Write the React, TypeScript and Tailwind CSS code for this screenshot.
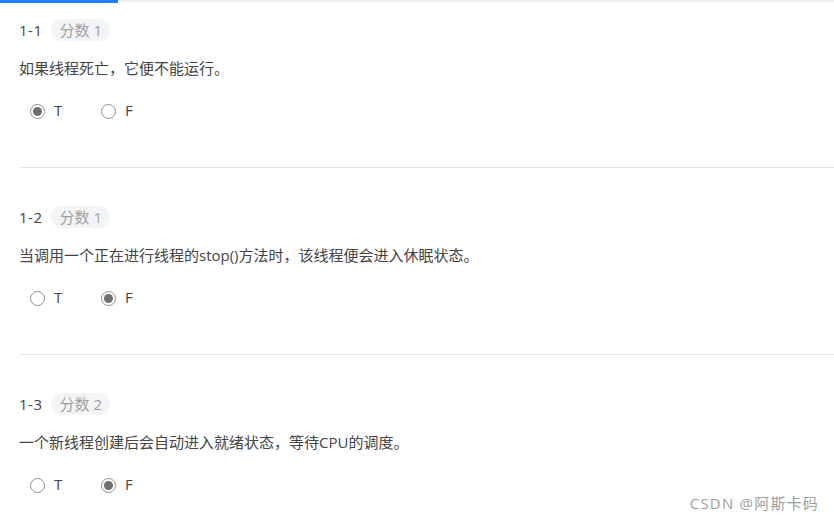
const questions = [
  { no: "1-1", score: 1, text: "如果线程死亡，它便不能运行。", answer: "T" },
  { no: "1-2", score: 1, text: "当调用一个正在进行线程的stop()方法时，该线程便会进入休眠状态。", answer: "F" },
  { no: "1-3", score: 2, text: "一个新线程创建后会自动进入就绪状态，等待CPU的调度。", answer: "F" },
];

function Radio({ label, checked }: { label: string; checked: boolean }) {
  return (
    <div className="flex w-[71px] items-center">
      <span className="flex h-[15px] w-[15px] shrink-0 items-center justify-center rounded-full border border-[#8f8f8f] bg-white">
        {checked && <span className="h-[9px] w-[9px] rounded-full bg-[#707070]" />}
      </span>
      <span className="ml-[9px] -mt-[2px] text-[15px] leading-[22px] text-[#444]">{label}</span>
    </div>
  );
}

export default function App() {
  return (
    <div
      className="relative h-[521px] w-[834px] overflow-hidden bg-white"
      style={{ fontFamily: '"Open Sans", "Noto Sans CJK SC", sans-serif' }}
    >
      <div className="flex items-start">
        <div className="h-[3px] w-[118px] bg-[#1e80ff]" />
        <div className="h-[2px] flex-1 bg-[#f0f0f0]" />
      </div>

      {questions.map((q, i) => (
        <div
          key={q.no}
          className={`ml-[19px] ${i === 0 ? "pt-[16px]" : "pt-[38px]"} ${
            i < questions.length - 1 ? "border-b border-[#e5e5e5] pb-[45px]" : ""
          }`}
        >
          <div className="flex h-[22px] items-center">
            <span className="text-[15px] tracking-[0.5px] text-[#444]">{q.no}</span>
            <span className="ml-[9px] flex h-[22px] items-center rounded-full bg-[#f3f4f6] px-[8px] text-[15px] text-[#a0a0a0]">
              分数 {q.score}
            </span>
          </div>
          <p className="mt-[16px] text-[15px] leading-[22px] text-[#444]">{q.text}</p>
          <div className="ml-[11px] mt-[21px] flex h-[22px] items-center">
            <Radio label="T" checked={q.answer === "T"} />
            <Radio label="F" checked={q.answer === "F"} />
          </div>
        </div>
      ))}

      <div className="absolute bottom-[7px] right-[15px] text-[15px] tracking-[1.2px] text-[#9d9d9d] [text-shadow:0_0_2px_#fff]">
        CSDN @阿斯卡码
      </div>
    </div>
  );
}
